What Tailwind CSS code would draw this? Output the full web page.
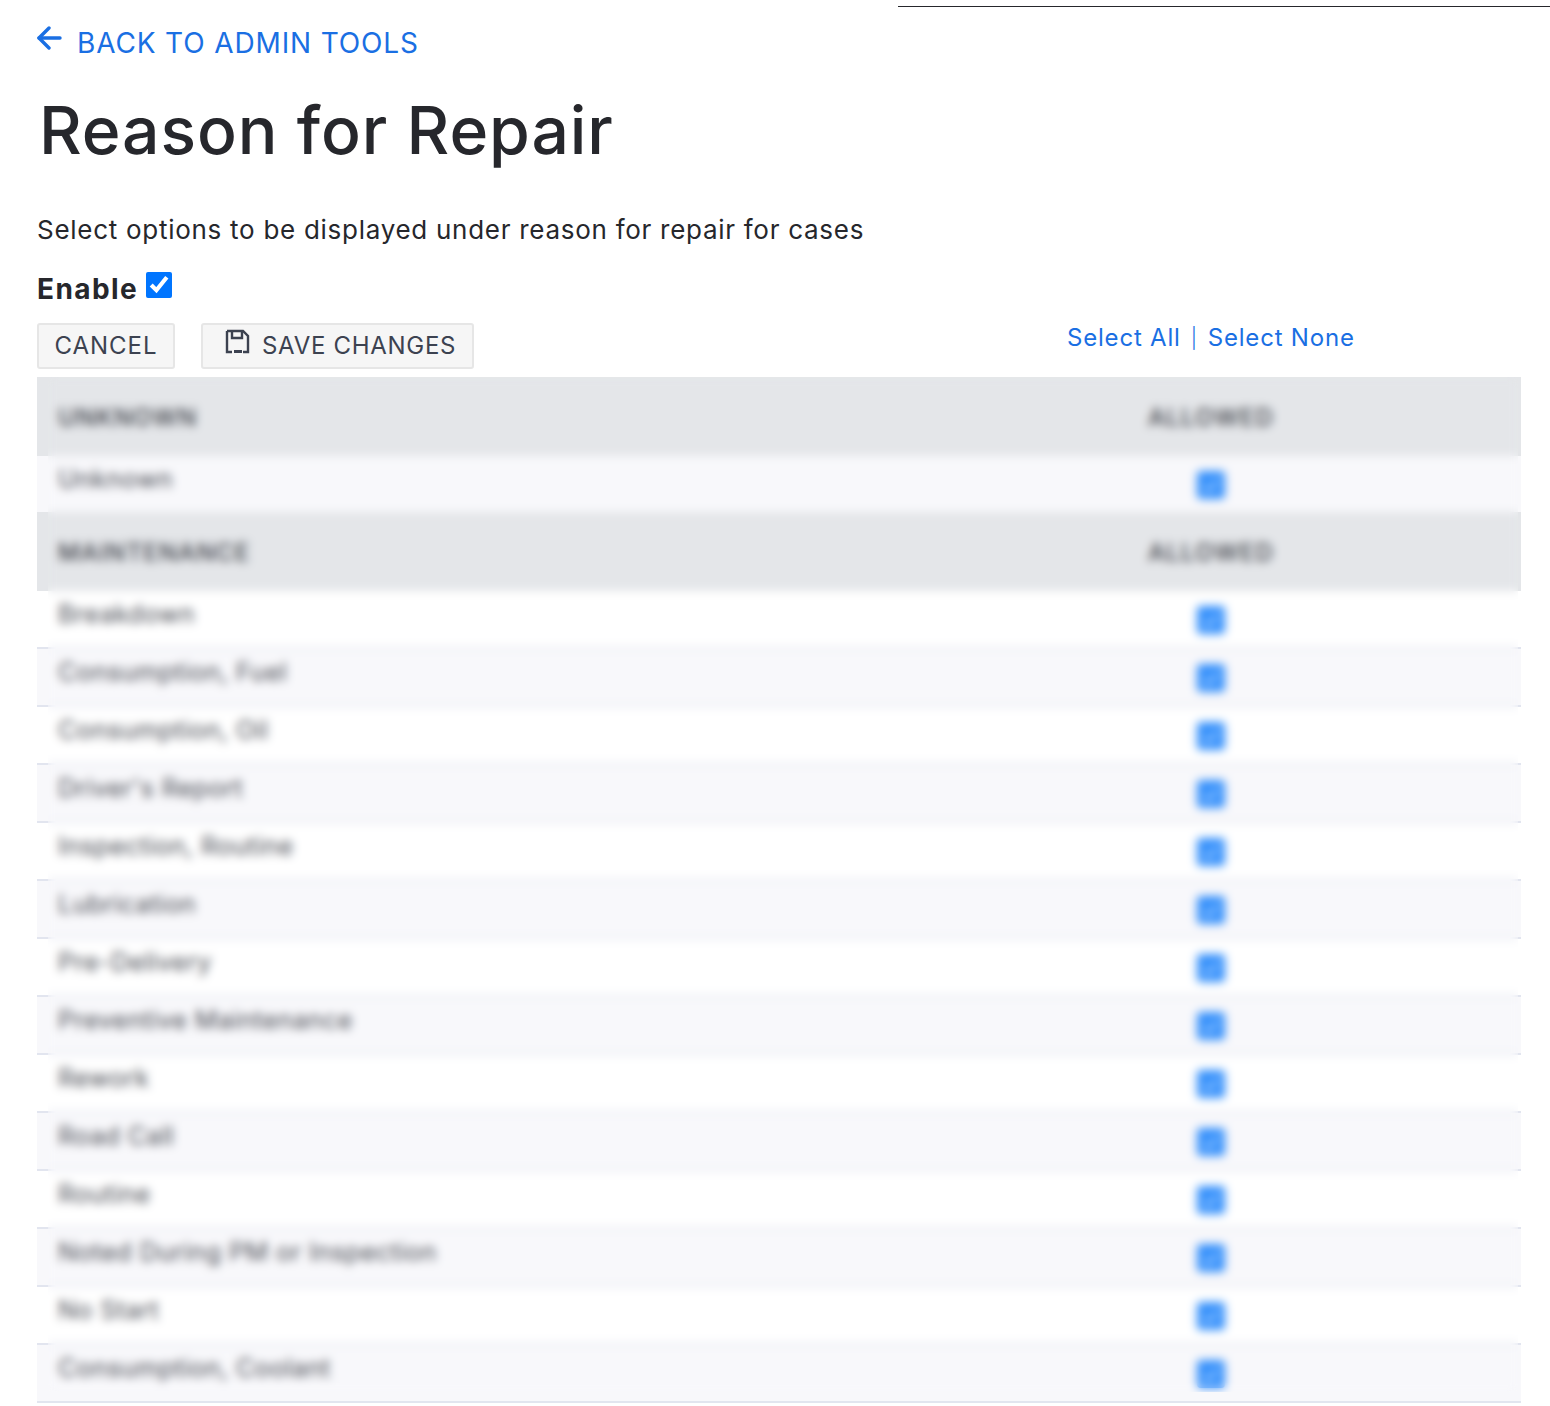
<!DOCTYPE html>
<html lang="en">
<head>
  <meta charset="UTF-8">
  <meta name="viewport" content="width=device-width, initial-scale=1.0">
  <title>Reason for Repair</title>
  <script src="https://cdn.jsdelivr.net/npm/@tailwindcss/browser@4"></script>
</head>
<body class="bg-white font-['Inter',sans-serif] text-[#26272c] overflow-hidden">
  <!-- Top rule -->
  <div class="flex justify-end pt-[6px]">
    <div class="w-[652px] h-px bg-[#26272c]"></div>
  </div>

  <div class="pl-[37px] pr-[29px]">
    <!-- Back link -->
    <a href="#" class="flex items-center h-[70px] -mt-px pb-[1px] text-[#1a6fe3] text-[28px] tracking-[0.86px]">
      <svg class="w-[26px] h-[26px] -mt-[6px]" viewBox="0 0 26 26" fill="none" stroke="currentColor" stroke-width="3.4" stroke-linecap="round" stroke-linejoin="round"><path d="M2 13H23"/><path d="M12 3L2 13L12 23"/></svg>
      <span class="ml-[14px] mt-[4px]">BACK TO ADMIN TOOLS</span>
    </a>

    <h1 class="text-[66px] leading-[80px] font-medium tracking-[0.9px] mt-[14px] ml-[2px]">Reason for Repair</h1>

    <p class="text-[26px] leading-[36px] mt-[42px] tracking-[0.72px]">Select options to be displayed under reason for repair for cases</p>

    <!-- Enable toggle -->
    <div class="flex items-start mt-[22px] h-[54px]">
      <label for="enable" class="text-[28px] leading-[36px] font-bold pt-[1px] tracking-[1.4px]">Enable</label>
      <input id="enable" type="checkbox" checked class="w-[26px] h-[26px] ml-[8px] mt-[2px] accent-[#0075ff]">
    </div>

    <!-- Actions -->
    <div class="flex items-start h-[54px] -mt-[1px]">
      <button class="h-[46px] w-[138px] bg-[#f6f6f6] border-2 border-[#e6e6e6] rounded-[3px] text-[24px] tracking-[1px] text-[#3c4250]">CANCEL</button>
      <button class="h-[46px] w-[273px] ml-[26px] bg-[#f6f6f6] border-2 border-[#e6e6e6] rounded-[3px] text-[24px] tracking-[0.7px] text-[#3c4250] flex items-center pl-[22px]">
        <svg class="w-[25px] h-[25px] -mt-[10px]" viewBox="0 0 25 25" fill="none" stroke="#3c4250" stroke-width="2.4"><path d="M2 2H18L23 7V23H18M7 23H2V2"/><path d="M7 2V9H17V2"/><path d="M9 22.5H17" stroke-width="3"/></svg>
        <span class="ml-[12px]">SAVE CHANGES</span>
      </button>
      <div class="ml-[593px] -mt-[2px] flex items-center text-[24px] leading-[34px] text-[#1a6fe3] tracking-[0.8px]">
        <a href="#">Select All</a>
        <span class="mx-[10px] text-[20px] font-light">|</span>
        <a href="#">Select None</a>
      </div>
    </div>

    <!-- Table: contents sit under a blurred panel -->
    <div class="relative w-[1484px]">
      <div class="flex items-center justify-between h-[79px] bg-[#e4e6e9] pl-[21px] text-[24px] font-medium tracking-[1.2px] text-[#3c3f47] pt-[2px]"><span>UNKNOWN</span><span class="w-[373px]">ALLOWED</span></div>
      <div class="flex items-center justify-between h-[56px] bg-[#f8f8fb] pl-[21px] text-[25px] tracking-[0.5px] text-[#484b53]"><span class="-mt-[8px]">Unknown</span><span class="w-[324px]"><span class="block mt-[2px] w-[28px] h-[28px] rounded-[4px] bg-[#3590fb]"><svg class="w-[28px] h-[28px]" viewBox="0 0 28 28" fill="none" stroke="#a6cffe" stroke-width="3"><path d="M7 15L12 20L21 9"/></svg></span></span></div>
      <div class="flex items-center justify-between h-[79px] bg-[#e4e6e9] pl-[21px] text-[24px] font-medium tracking-[1.2px] text-[#3c3f47] pt-[2px]"><span>MAINTENANCE</span><span class="w-[373px]">ALLOWED</span></div>
      <div class="flex items-center justify-between h-[58px] bg-white border-b-2 border-[#e2e5ef] pl-[21px] text-[25px] tracking-[0.5px] text-[#484b53]"><span class="-mt-[8px]">Breakdown</span><span class="w-[324px]"><span class="block mt-[2px] w-[28px] h-[28px] rounded-[4px] bg-[#3590fb]"><svg class="w-[28px] h-[28px]" viewBox="0 0 28 28" fill="none" stroke="#a6cffe" stroke-width="3"><path d="M7 15L12 20L21 9"/></svg></span></span></div>
      <div class="flex items-center justify-between h-[58px] bg-[#f8f8fb] border-b-2 border-[#e2e5ef] pl-[21px] text-[25px] tracking-[0.5px] text-[#484b53]"><span class="-mt-[8px]">Consumption, Fuel</span><span class="w-[324px]"><span class="block mt-[2px] w-[28px] h-[28px] rounded-[4px] bg-[#3590fb]"><svg class="w-[28px] h-[28px]" viewBox="0 0 28 28" fill="none" stroke="#a6cffe" stroke-width="3"><path d="M7 15L12 20L21 9"/></svg></span></span></div>
      <div class="flex items-center justify-between h-[58px] bg-white border-b-2 border-[#e2e5ef] pl-[21px] text-[25px] tracking-[0.5px] text-[#484b53]"><span class="-mt-[8px]">Consumption, Oil</span><span class="w-[324px]"><span class="block mt-[2px] w-[28px] h-[28px] rounded-[4px] bg-[#3590fb]"><svg class="w-[28px] h-[28px]" viewBox="0 0 28 28" fill="none" stroke="#a6cffe" stroke-width="3"><path d="M7 15L12 20L21 9"/></svg></span></span></div>
      <div class="flex items-center justify-between h-[58px] bg-[#f8f8fb] border-b-2 border-[#e2e5ef] pl-[21px] text-[25px] tracking-[0.5px] text-[#484b53]"><span class="-mt-[8px]">Driver's Report</span><span class="w-[324px]"><span class="block mt-[2px] w-[28px] h-[28px] rounded-[4px] bg-[#3590fb]"><svg class="w-[28px] h-[28px]" viewBox="0 0 28 28" fill="none" stroke="#a6cffe" stroke-width="3"><path d="M7 15L12 20L21 9"/></svg></span></span></div>
      <div class="flex items-center justify-between h-[58px] bg-white border-b-2 border-[#e2e5ef] pl-[21px] text-[25px] tracking-[0.5px] text-[#484b53]"><span class="-mt-[8px]">Inspection, Routine</span><span class="w-[324px]"><span class="block mt-[2px] w-[28px] h-[28px] rounded-[4px] bg-[#3590fb]"><svg class="w-[28px] h-[28px]" viewBox="0 0 28 28" fill="none" stroke="#a6cffe" stroke-width="3"><path d="M7 15L12 20L21 9"/></svg></span></span></div>
      <div class="flex items-center justify-between h-[58px] bg-[#f8f8fb] border-b-2 border-[#e2e5ef] pl-[21px] text-[25px] tracking-[0.5px] text-[#484b53]"><span class="-mt-[8px]">Lubrication</span><span class="w-[324px]"><span class="block mt-[2px] w-[28px] h-[28px] rounded-[4px] bg-[#3590fb]"><svg class="w-[28px] h-[28px]" viewBox="0 0 28 28" fill="none" stroke="#a6cffe" stroke-width="3"><path d="M7 15L12 20L21 9"/></svg></span></span></div>
      <div class="flex items-center justify-between h-[58px] bg-white border-b-2 border-[#e2e5ef] pl-[21px] text-[25px] tracking-[0.5px] text-[#484b53]"><span class="-mt-[8px]">Pre-Delivery</span><span class="w-[324px]"><span class="block mt-[2px] w-[28px] h-[28px] rounded-[4px] bg-[#3590fb]"><svg class="w-[28px] h-[28px]" viewBox="0 0 28 28" fill="none" stroke="#a6cffe" stroke-width="3"><path d="M7 15L12 20L21 9"/></svg></span></span></div>
      <div class="flex items-center justify-between h-[58px] bg-[#f8f8fb] border-b-2 border-[#e2e5ef] pl-[21px] text-[25px] tracking-[0.5px] text-[#484b53]"><span class="-mt-[8px]">Preventive Maintenance</span><span class="w-[324px]"><span class="block mt-[2px] w-[28px] h-[28px] rounded-[4px] bg-[#3590fb]"><svg class="w-[28px] h-[28px]" viewBox="0 0 28 28" fill="none" stroke="#a6cffe" stroke-width="3"><path d="M7 15L12 20L21 9"/></svg></span></span></div>
      <div class="flex items-center justify-between h-[58px] bg-white border-b-2 border-[#e2e5ef] pl-[21px] text-[25px] tracking-[0.5px] text-[#484b53]"><span class="-mt-[8px]">Rework</span><span class="w-[324px]"><span class="block mt-[2px] w-[28px] h-[28px] rounded-[4px] bg-[#3590fb]"><svg class="w-[28px] h-[28px]" viewBox="0 0 28 28" fill="none" stroke="#a6cffe" stroke-width="3"><path d="M7 15L12 20L21 9"/></svg></span></span></div>
      <div class="flex items-center justify-between h-[58px] bg-[#f8f8fb] border-b-2 border-[#e2e5ef] pl-[21px] text-[25px] tracking-[0.5px] text-[#484b53]"><span class="-mt-[8px]">Road Call</span><span class="w-[324px]"><span class="block mt-[2px] w-[28px] h-[28px] rounded-[4px] bg-[#3590fb]"><svg class="w-[28px] h-[28px]" viewBox="0 0 28 28" fill="none" stroke="#a6cffe" stroke-width="3"><path d="M7 15L12 20L21 9"/></svg></span></span></div>
      <div class="flex items-center justify-between h-[58px] bg-white border-b-2 border-[#e2e5ef] pl-[21px] text-[25px] tracking-[0.5px] text-[#484b53]"><span class="-mt-[8px]">Routine</span><span class="w-[324px]"><span class="block mt-[2px] w-[28px] h-[28px] rounded-[4px] bg-[#3590fb]"><svg class="w-[28px] h-[28px]" viewBox="0 0 28 28" fill="none" stroke="#a6cffe" stroke-width="3"><path d="M7 15L12 20L21 9"/></svg></span></span></div>
      <div class="flex items-center justify-between h-[58px] bg-[#f8f8fb] border-b-2 border-[#e2e5ef] pl-[21px] text-[25px] tracking-[0.5px] text-[#484b53]"><span class="-mt-[8px]">Noted During PM or Inspection</span><span class="w-[324px]"><span class="block mt-[2px] w-[28px] h-[28px] rounded-[4px] bg-[#3590fb]"><svg class="w-[28px] h-[28px]" viewBox="0 0 28 28" fill="none" stroke="#a6cffe" stroke-width="3"><path d="M7 15L12 20L21 9"/></svg></span></span></div>
      <div class="flex items-center justify-between h-[58px] bg-white border-b-2 border-[#e2e5ef] pl-[21px] text-[25px] tracking-[0.5px] text-[#484b53]"><span class="-mt-[8px]">No Start</span><span class="w-[324px]"><span class="block mt-[2px] w-[28px] h-[28px] rounded-[4px] bg-[#3590fb]"><svg class="w-[28px] h-[28px]" viewBox="0 0 28 28" fill="none" stroke="#a6cffe" stroke-width="3"><path d="M7 15L12 20L21 9"/></svg></span></span></div>
      <div class="flex items-center justify-between h-[58px] bg-[#f8f8fb] border-b-2 border-[#e2e5ef] pl-[21px] text-[25px] tracking-[0.5px] text-[#484b53]"><span class="-mt-[8px]">Consumption, Coolant</span><span class="w-[324px]"><span class="block mt-[2px] w-[28px] h-[28px] rounded-[4px] bg-[#3590fb]"><svg class="w-[28px] h-[28px]" viewBox="0 0 28 28" fill="none" stroke="#a6cffe" stroke-width="3"><path d="M7 15L12 20L21 9"/></svg></span></span></div>

      <!-- Blur panel -->
      <div class="absolute left-[11px] top-0 w-[1470px] h-[1015px] backdrop-blur-[5px]"></div>
    </div>
  </div>
</body>
</html>
